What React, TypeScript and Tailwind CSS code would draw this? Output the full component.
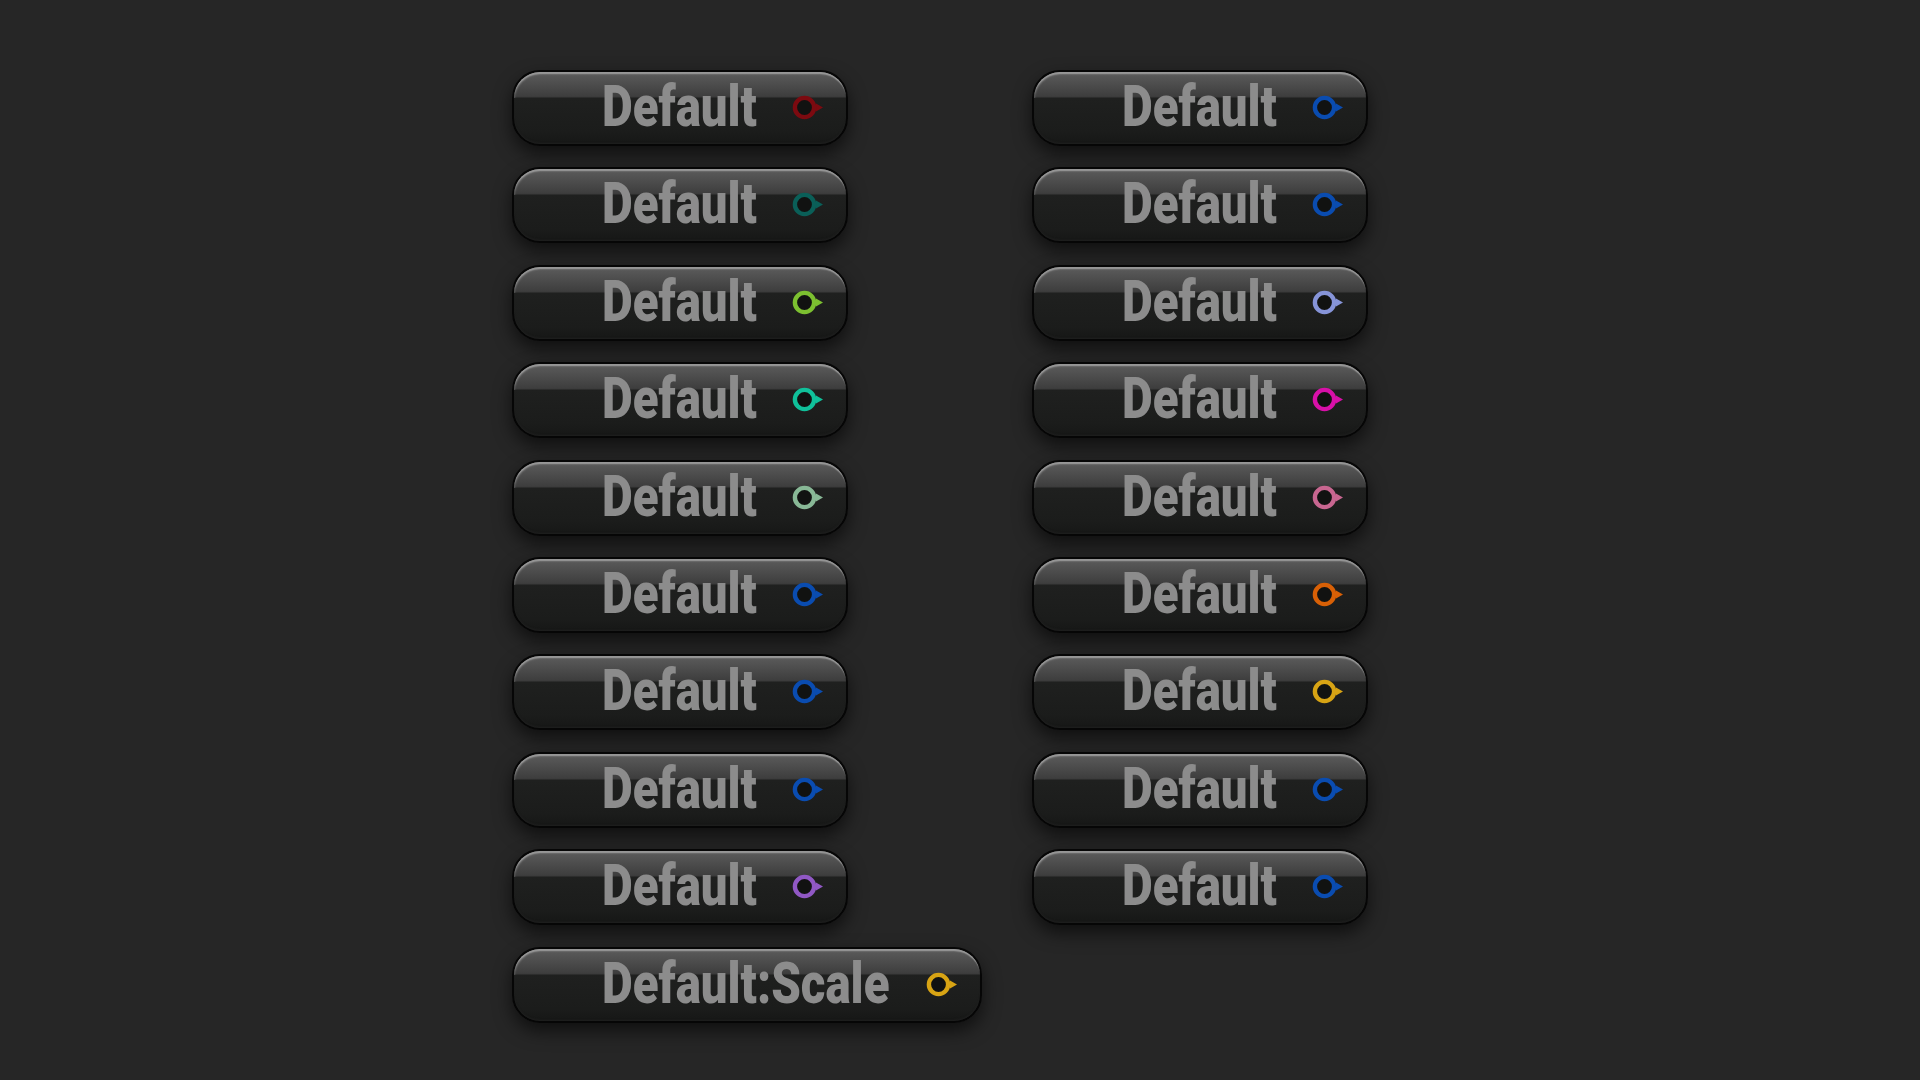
const leftColors = ["#7c0a10", "#0a5f58", "#7cc030", "#10c09a", "#88b896", "#0a4cb0", "#0a4cb0", "#0a4cb0", "#9058c4"]
const rightColors = ["#0a4cb0", "#0a4cb0", "#8694d8", "#d810a8", "#c86690", "#d86006", "#d8a414", "#0a4cb0", "#0a4cb0"]

function PortIcon({ color }: { color: string }) {
  return (
    <svg width="32" height="26" viewBox="0 0 32 26" className="shrink-0 blur-[0.5px]">
      <path d="M24 9.5 L31 13.5 L24 17.5 Z" fill={color} />
      <circle cx="12.5" cy="13.5" r="9.6" fill="#111211" stroke={color} strokeWidth="4.4" />
    </svg>
  )
}

function GlossButton({ label, color, wide }: { label: string; color: string; wide?: boolean }) {
  return (
    <div
      className={`relative h-[76px] overflow-hidden rounded-[28px] border-2 border-[#060606] bg-[linear-gradient(180deg,#5c5c5c_0px,#3e3e3e_24px,#3a3a3a_25px,#1f201f_26px,#1b1c1b_60px,#161716_100%)] ${
        wide ? "w-[470px]" : "w-[336px]"
      }`}
    >
      <div className="flex h-full items-center pl-[88px]">
        <span className="-mt-1 inline-block w-[153px] origin-left scale-x-[0.817] whitespace-nowrap font-['Roboto','Liberation_Sans',sans-serif] text-[58px] leading-none font-black text-[#8c8c8c] blur-[0.3px]">
          {label}
        </span>
      </div>
      <div className="absolute top-[22px] right-[22px]">
        <PortIcon color={color} />
      </div>
      <div className="pointer-events-none absolute inset-x-0 top-0 h-[26px] rounded-t-[26px] shadow-[inset_0_3px_1px_-1px_#969696,inset_1px_3px_2px_-1px_#808080]" />
      <div className="pointer-events-none absolute inset-0 rounded-[26px] shadow-[inset_0_-2px_2px_-1px_#202020]" />
    </div>
  )
}

export default function App() {
  return (
    <div className="min-h-[1080px] bg-[#262626] pt-[70px] pl-[512px]">
      <div className="grid w-[856px] grid-cols-[336px_336px] gap-x-[184px] gap-y-[21.4px]">
        {leftColors.map((color, i) => (
          <div className="contents" key={i}>
            <div className="rounded-[28px] shadow-[0_8px_18px_rgba(0,0,0,0.6)]">
              <GlossButton label="Default" color={color} />
            </div>
            <div className="rounded-[28px] shadow-[0_8px_18px_rgba(0,0,0,0.6)]">
              <GlossButton label="Default" color={rightColors[i]} />
            </div>
          </div>
        ))}
        <div className="col-span-2 w-[470px] rounded-[28px] shadow-[0_8px_18px_rgba(0,0,0,0.6)]">
          <GlossButton label="Default:Scale" color="#d8a414" wide />
        </div>
      </div>
    </div>
  )
}
